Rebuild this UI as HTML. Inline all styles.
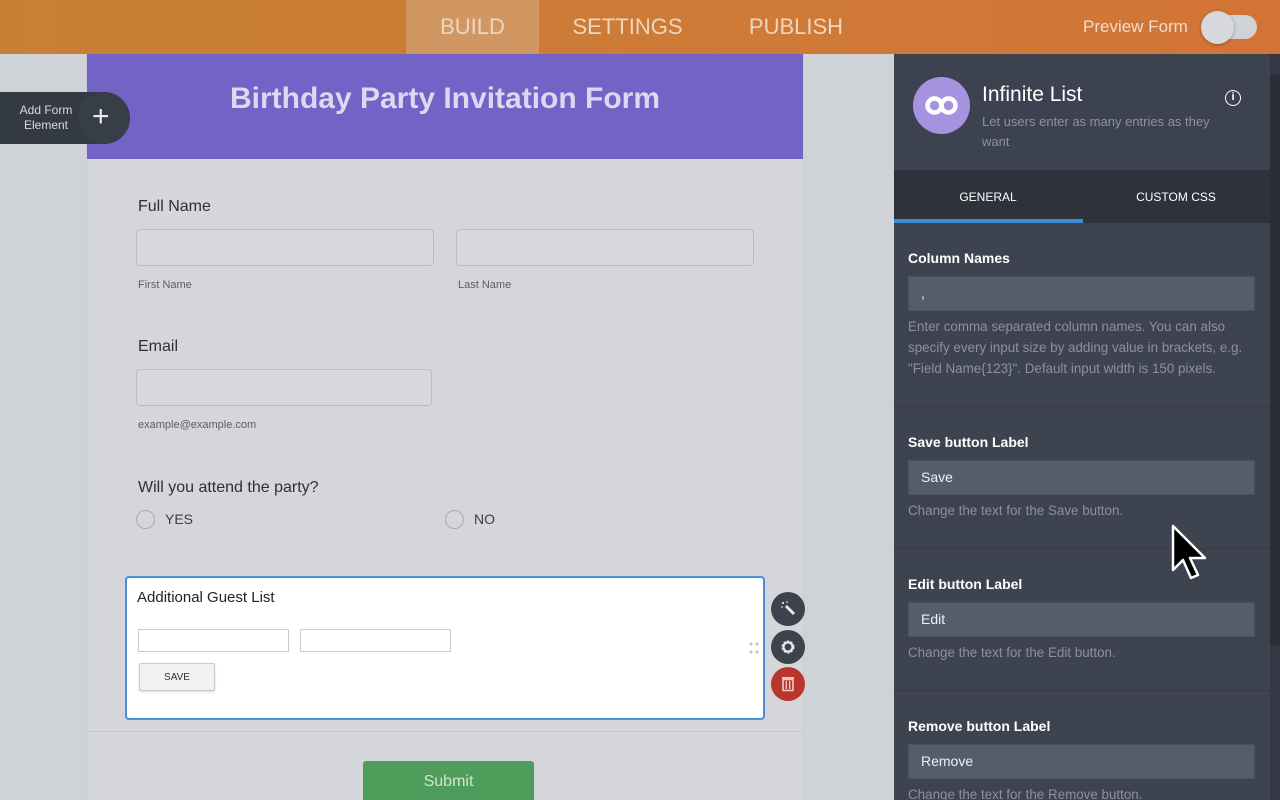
<!DOCTYPE html>
<html><head><meta charset="utf-8"><style>
*{box-sizing:border-box;margin:0;padding:0}
html,body{width:1280px;height:800px;overflow:hidden}
body{font-family:"Liberation Sans",sans-serif;background:#cfd2d6;position:relative}
.top{position:absolute;left:0;top:0;width:1280px;height:54px;background:linear-gradient(90deg,#c78136,#cf7a37 60%,#d27436)}
.tab{position:absolute;top:0;height:54px;line-height:54px;color:#ecd6c0;font-size:22px;text-align:center}
.card{position:absolute;left:86px;top:54px;width:718px;height:746px;background:#d5d6d9;border-left:1px solid #c8cbd2;border-right:1px solid #c8cbd2}
.hdr{position:absolute;left:87px;top:54px;width:716px;height:105px;background:#7363c7;color:#dcd8ef;font-size:30px;font-weight:bold;text-align:center;line-height:90px}
.lbl{position:absolute;color:#2d2f36;font-size:16px}
.sub{position:absolute;color:#5b5e66;font-size:11px}
.inp{position:absolute;height:37px;border:1px solid #b9bcc2;border-radius:4px;background:#d7d8db}
.radio{position:absolute;width:19px;height:19px;border:1px solid #a9acb2;border-radius:50%}
.panel{position:absolute;left:894px;top:54px;width:376px;height:746px;background:#3e4350}
.pl{position:absolute;left:14px;color:#fff;font-weight:bold;font-size:14px}
.pi{position:absolute;left:14px;width:347px;height:35px;background:#555c6a;border:1px solid #4a505c;color:#eef;font-size:14px;line-height:33px;padding-left:12px}
.ph{position:absolute;left:14px;color:#8c919c;font-size:13.4px;line-height:21px;width:352px}
.sep{position:absolute;left:0;width:376px;height:1px;background:#353944}
.circ{position:absolute;width:34px;height:34px;border-radius:50%;left:771px}
</style></head><body>
<div class="top"></div>
<div class="tab" style="left:406px;width:133px;background:#d19763">BUILD</div>
<div class="tab" style="left:560px;width:135px">SETTINGS</div>
<div class="tab" style="left:735px;width:122px">PUBLISH</div>
<div style="position:absolute;left:1083px;top:17px;color:#f1dccb;font-size:17px">Preview Form</div>
<div style="position:absolute;left:1203px;top:15px;width:54px;height:24px;border-radius:12px;background:#cfd2d6"></div>
<div style="position:absolute;left:1201px;top:11px;width:33px;height:33px;border-radius:50%;background:#d6d8db;box-shadow:0 1px 3px rgba(0,0,0,.3)"></div>

<div class="card"></div>
<div class="hdr">Birthday Party Invitation Form</div>
<div style="position:absolute;left:0;top:92px;width:130px;height:52px;background:#343a44;border-radius:0 26px 26px 0"></div>
<div style="position:absolute;left:78px;top:92px;width:52px;height:52px;border-radius:50%;background:#383e48"></div>
<div style="position:absolute;left:10px;top:103px;width:72px;color:#d8dbe0;font-size:12px;text-align:center;line-height:15px">Add Form Element</div>
<div style="position:absolute;left:92px;top:100px;color:#e8eaee;font-size:30px;font-weight:200;line-height:34px">+</div>

<div class="lbl" style="left:138px;top:198px">Full Name</div>
<div class="inp" style="left:136px;top:229px;width:298px"></div>
<div class="inp" style="left:456px;top:229px;width:298px"></div>
<div class="sub" style="left:138px;top:279px">First Name</div>
<div class="sub" style="left:458px;top:279px">Last Name</div>
<div class="lbl" style="left:138px;top:338px">Email</div>
<div class="inp" style="left:136px;top:369px;width:296px"></div>
<div class="sub" style="left:138px;top:419px">example@example.com</div>
<div class="lbl" style="left:138px;top:479px">Will you attend the party?</div>
<div class="radio" style="left:136px;top:510px"></div>
<div class="lbl" style="left:165px;top:511px;font-size:14px;color:#3a3d44">YES</div>
<div class="radio" style="left:445px;top:510px"></div>
<div class="lbl" style="left:474px;top:511px;font-size:14px;color:#3a3d44">NO</div>

<div style="position:absolute;left:125px;top:576px;width:640px;height:144px;background:#fff;border:2px solid #4b8fd6;border-radius:4px"></div>
<div class="lbl" style="left:137px;top:589px;font-size:15px;color:#222">Additional Guest List</div>
<div style="position:absolute;left:138px;top:629px;width:151px;height:23px;border:1px solid #c9cbcf"></div>
<div style="position:absolute;left:300px;top:629px;width:151px;height:23px;border:1px solid #c9cbcf"></div>
<div style="position:absolute;left:139px;top:663px;width:76px;height:28px;border:1px solid #c6c8cc;border-radius:2px;background:#f1f1f1;box-shadow:0 1px 2px rgba(0,0,0,.15);font-size:10px;color:#333;text-align:center;line-height:27px">SAVE</div>
<div style="position:absolute;left:748px;top:640px;width:12px;height:18px;background-image:radial-gradient(circle,#b9bcc2 1.3px,transparent 1.6px);background-size:6px 8px"></div>
<div class="circ" style="top:592px;background:#3d434d"><svg width="34" height="34"><path d="M15 14l8 8" stroke="#e6e8ec" stroke-width="3"/><circle cx="12" cy="11" r="1" fill="#fff"/><circle cx="16" cy="10" r=".8" fill="#fff"/><circle cx="11" cy="15" r=".8" fill="#fff"/></svg></div>
<div class="circ" style="top:630px;background:#3d434d"><svg width="34" height="34"><circle cx="17" cy="17" r="5" fill="none" stroke="#e6e8ec" stroke-width="3" stroke-dasharray="2.2 1"/><circle cx="17" cy="17" r="4.5" fill="none" stroke="#e6e8ec" stroke-width="2"/></svg></div>
<div class="circ" style="top:667px;background:#b8362e"><svg width="34" height="34"><rect x="11" y="10" width="12" height="2" fill="#f3c8c4"/><rect x="12" y="12.5" width="10" height="11" fill="none" stroke="#f3c8c4" stroke-width="1.6"/><path d="M15.3 14v8M18.7 14v8" stroke="#f3c8c4" stroke-width="1.4"/></svg></div>
<div style="position:absolute;left:87px;top:731px;width:716px;height:1px;background:#c5c8ce"></div>
<div style="position:absolute;left:363px;top:761px;width:171px;height:42px;background:#4f9d5b;border-radius:3px;color:#cfe6d2;font-size:16px;text-align:center;line-height:42px">Submit</div>

<div class="panel">
<div style="position:absolute;left:0;top:0;width:376px;height:116px;background:#3d4250"></div>
<div style="position:absolute;left:19px;top:23px;width:57px;height:57px;border-radius:50%;background:#a593e0"><svg width="57" height="57"><circle cx="21.5" cy="28.5" r="7" fill="none" stroke="#fff" stroke-width="4.5"/><circle cx="35.5" cy="28.5" r="7" fill="none" stroke="#fff" stroke-width="4.5"/></svg></div>
<div style="position:absolute;left:88px;top:29px;color:#fff;font-size:21px">Infinite List</div>
<div style="position:absolute;left:88px;top:58px;width:248px;color:#8d929d;font-size:13px;line-height:20px">Let users enter as many entries as they want</div>
<div style="position:absolute;left:331px;top:36px;width:16px;height:16px;border:1.8px solid #fff;border-radius:50%;color:#fff;font-size:11px;font-weight:bold;text-align:center;line-height:13px">i</div>
<div style="position:absolute;left:0;top:116px;width:376px;height:53px;background:#2e323b"></div>
<div style="position:absolute;left:0;top:136px;width:188px;text-align:center;color:#fff;font-size:12px">GENERAL</div>
<div style="position:absolute;left:188px;top:136px;width:188px;text-align:center;color:#fff;font-size:12px">CUSTOM CSS</div>
<div style="position:absolute;left:0;top:165px;width:189px;height:4px;background:#3d8ad6"></div>
<div class="pl" style="top:196px">Column Names</div>
<div class="pi" style="top:222px">,</div>
<div class="ph" style="top:262px">Enter comma separated column names. You can also specify every input size by adding value in brackets, e.g. "Field Name{123}". Default input width is 150 pixels.</div>
<div class="sep" style="top:352px"></div>
<div class="pl" style="top:380px">Save button Label</div>
<div class="pi" style="top:406px">Save</div>
<div class="ph" style="top:446px">Change the text for the Save button.</div>
<div class="sep" style="top:494px"></div>
<div class="pl" style="top:522px">Edit button Label</div>
<div class="pi" style="top:548px">Edit</div>
<div class="ph" style="top:588px">Change the text for the Edit button.</div>
<div class="sep" style="top:636px"></div>
<div class="pl" style="top:664px">Remove button Label</div>
<div class="pi" style="top:690px">Remove</div>
<div class="ph" style="top:730px">Change the text for the Remove button.</div>
</div>
<div style="position:absolute;left:1270px;top:54px;width:10px;height:746px;background:#343844"></div>
<div style="position:absolute;left:1270px;top:75px;width:10px;height:570px;background:#2b2e36"></div>
<svg style="position:absolute;left:1168px;top:522px" width="48" height="60"><path d="M5 4v44l10-10 8 18 7-3-8-17h15z" fill="#000" stroke="#fff" stroke-width="2.5" stroke-linejoin="round"/></svg>
</body></html>
